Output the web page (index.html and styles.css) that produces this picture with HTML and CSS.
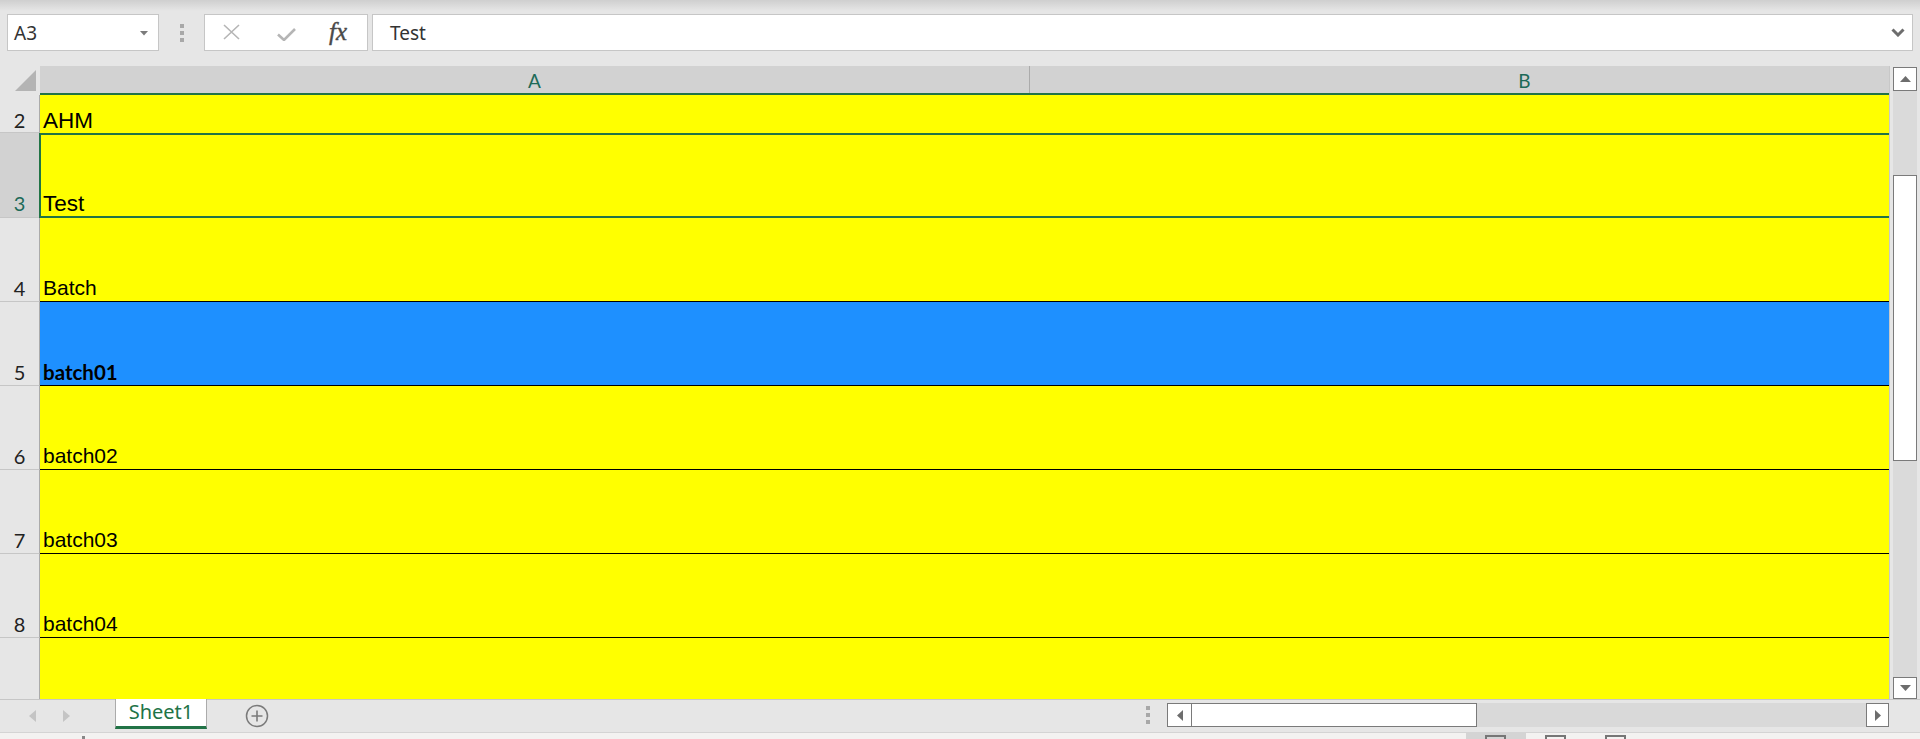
FILE: index.html
```html
<!DOCTYPE html>
<html lang="en">
<head>
    <meta charset="UTF-8">
    <title>Book1 - Sheet1</title>
    <link rel="stylesheet" href="styles.css">
</head>
<body>
    <div class="formula-bar">
        <div class="name-box">
            <span>A3</span>
            <svg class="nb-arrow" width="8" height="5" viewBox="0 0 8 5"><polygon points="0,0 8,0 4,4.5" fill="#7b7b7b"/></svg>
        </div>
        <div class="grip"><i></i><i></i><i></i></div>
        <div class="fx-buttons">
            <svg class="fx-cancel" width="17" height="16" viewBox="0 0 17 16"><path d="M1 1 L16 15 M16 1 L1 15" stroke="#b5b5b5" stroke-width="1.6" fill="none"/></svg>
            <svg class="fx-enter" width="19" height="13" viewBox="0 0 19 13"><path d="M1 6.5 L7 12 L18 1" stroke="#b5b5b5" stroke-width="2.6" fill="none"/></svg>
            <span class="fx-label"><i>f</i><i>x</i></span>
        </div>
        <div class="formula-input">
            <span>Test</span>
            <svg class="fx-expand" width="14" height="9" viewBox="0 0 14 9"><path d="M1.5 1.5 L7 7 L12.5 1.5" stroke="#6d6d6d" stroke-width="3" fill="none"/></svg>
        </div>
    </div>

    <div class="workbook">
        <div class="sheet">
            <div class="col-head-row">
                <div class="corner">
                    <svg width="22" height="22" viewBox="0 0 22 22"><polygon points="21,0 21,21 0,21" fill="#b4b4b4"/></svg>
                </div>
                <div class="col-heads">
                    <div class="col-head">A</div>
                    <div class="col-head">B</div>
                </div>
            </div>

            <div class="row row-short">
                <div class="row-head">2</div>
                <div class="cell cell-lg">AHM</div>
            </div>
            <div class="row row-selected">
                <div class="row-head">3</div>
                <div class="cell cell-lg">Test</div>
            </div>
            <div class="row">
                <div class="row-head">4</div>
                <div class="cell">Batch</div>
            </div>
            <div class="row">
                <div class="row-head">5</div>
                <div class="cell cell-blue">batch01</div>
            </div>
            <div class="row">
                <div class="row-head">6</div>
                <div class="cell">batch02</div>
            </div>
            <div class="row">
                <div class="row-head">7</div>
                <div class="cell">batch03</div>
            </div>
            <div class="row">
                <div class="row-head">8</div>
                <div class="cell">batch04</div>
            </div>
            <div class="row">
                <div class="row-head"></div>
                <div class="cell"></div>
            </div>
        </div>

        <div class="vscroll">
            <div class="vbtn">
                <svg width="11" height="6" viewBox="0 0 11 6"><polygon points="0,6 11,6 5.5,0" fill="#6d6d6d"/></svg>
            </div>
            <div class="vtrack"><div class="vthumb"></div></div>
            <div class="vbtn vbtn-down">
                <svg width="11" height="6" viewBox="0 0 11 6"><polygon points="0,0 11,0 5.5,6" fill="#6d6d6d"/></svg>
            </div>
        </div>
    </div>

    <div class="tab-bar">
        <div class="tab-nav">
            <span><svg width="7" height="12" viewBox="0 0 7 12"><polygon points="7,0 7,12 0,6" fill="#c4c4c4"/></svg></span>
            <span><svg width="7" height="12" viewBox="0 0 7 12"><polygon points="0,0 0,12 7,6" fill="#c4c4c4"/></svg></span>
        </div>
        <div class="sheet-tab">Sheet1</div>
        <div class="add-sheet">
            <svg width="24" height="24" viewBox="0 0 24 24">
                <circle cx="12" cy="12" r="10.5" stroke="#7a7a7a" stroke-width="1.5" fill="none"/>
                <path d="M12 6.5 V17.5 M6.5 12 H17.5" stroke="#7a7a7a" stroke-width="1.6"/>
            </svg>
        </div>
        <div class="hscroll">
            <div class="grip grip-small"><i></i><i></i><i></i></div>
            <div class="hbtn">
                <svg width="6" height="11" viewBox="0 0 6 11"><polygon points="6,0 6,11 0,5.5" fill="#6d6d6d"/></svg>
            </div>
            <div class="hthumb"></div>
            <div class="htrack"></div>
            <div class="hbtn hbtn-right">
                <svg width="6" height="11" viewBox="0 0 6 11"><polygon points="0,0 0,11 6,5.5" fill="#6d6d6d"/></svg>
            </div>
        </div>
    </div>

    <div class="status-bar">
        <i class="status-mark"></i>
        <div class="view-btns">
            <div class="view-btn active"><i></i></div>
            <div class="view-btn"><i></i></div>
            <div class="view-btn"><i></i></div>
        </div>
    </div>
</body>
</html>
```

FILE: styles.css
```css
* {
    margin: 0;
    padding: 0;
    box-sizing: border-box;
}

body {
    width: 1920px;
    height: 739px;
    overflow: hidden;
    background: #e6e6e6;
    font-family: "Noto Sans", "Open Sans", sans-serif;
    color: #333;
}

/* formula bar */

.formula-bar {
    height: 66px;
    padding-top: 14px;
    display: flex;
    align-items: flex-start;
    background: linear-gradient(#cfcfcf, #e6e6e6 11px);
}

.name-box {
    margin-left: 7px;
    width: 152px;
    height: 37px;
    background: #fff;
    border: 1px solid #c6c6c6;
    display: flex;
    align-items: center;
    justify-content: space-between;
    padding: 0 10px 0 6px;
    font-size: 19px;
    color: #333;
}

.nb-arrow {
    margin-top: 1px;
}

.grip {
    width: 45px;
    height: 37px;
    display: flex;
    flex-direction: column;
    align-items: center;
    justify-content: center;
    gap: 3px;
}

.grip i {
    display: block;
    width: 4px;
    height: 4px;
    background: #a8a8a8;
}

.fx-buttons {
    width: 164px;
    height: 37px;
    background: #fff;
    border: 1px solid #c6c6c6;
    display: flex;
    align-items: center;
    padding-left: 18px;
}

.fx-cancel {
    margin-top: -2px;
}

.fx-enter {
    margin-left: 37px;
    margin-top: 4px;
}

.fx-label {
    margin-left: 33px;
    font-family: "Liberation Serif", serif;
    font-size: 25px;
    color: #4a4a4a;
    line-height: 1;
    margin-top: -2px;
    -webkit-text-stroke: 0.4px #4a4a4a;
}

.formula-input {
    flex: 1;
    margin: 0 7px 0 4px;
    height: 37px;
    background: #fff;
    border: 1px solid #c6c6c6;
    display: flex;
    align-items: center;
    justify-content: space-between;
    padding: 0 7px 0 17px;
    font-size: 19px;
    color: #333;
}

/* sheet grid */

.workbook {
    height: 633px;
    display: flex;
}

.sheet {
    flex: 1;
    display: flex;
    flex-direction: column;
    overflow: hidden;
}

.col-head-row {
    height: 29px;
    display: flex;
    flex-shrink: 0;
}

.corner {
    width: 40px;
    background: #e6e6e6;
    padding: 4px 0 0 15px;
}

.col-heads {
    flex: 1;
    display: flex;
    overflow: hidden;
    background: #d2d2d2;
    border-bottom: 2px solid #217346;
}

.col-head {
    flex: 0 0 990px;
    border-right: 1px solid #ababab;
    text-align: center;
    font-family: Lato, "Liberation Sans", sans-serif;
    font-size: 19px;
    line-height: 29px;
    color: #1d6a58;
}

.row {
    display: flex;
    height: 84px;
    flex-shrink: 0;
}

.row-short {
    height: 38px;
}

.row-selected {
    height: 85px;
}

.row-head {
    width: 40px;
    background: #e6e6e6;
    border-right: 1px solid #ababab;
    border-bottom: 1px solid #c6c6c6;
    display: flex;
    align-items: flex-end;
    justify-content: center;
    padding-bottom: 1px;
    font-family: Lato, "Liberation Sans", sans-serif;
    font-size: 20px;
    line-height: 24px;
    color: #222;
}

.cell {
    flex: 1;
    background: #ffff00;
    border-bottom: 1px solid #000;
    display: flex;
    align-items: flex-end;
    padding: 0 0 1px 3px;
    font-family: "Liberation Sans", Arial, sans-serif;
    font-size: 21px;
    line-height: 24px;
    color: #000;
}

.cell-lg {
    font-size: 22.5px;
}

.row-short .cell {
    border-bottom: none;
    padding-bottom: 0;
}

.row-short .row-head {
    padding-bottom: 0;
}

.row-selected .row-head {
    background: #d2d2d2;
    color: #1d6a58;
    padding-bottom: 2px;
}

.row-selected .cell {
    border-bottom: none;
    padding-bottom: 2px;
    margin-left: -1px;
    padding-left: 4px;
    box-shadow: inset 2px 0 0 #217346, inset 0 2px 0 #217346, inset 0 -2px 0 #217346;
}

.cell-blue {
    background: #1e90ff;
    font-family: Lato, "Liberation Sans", sans-serif;
    font-weight: 700;
    font-size: 20.5px;
}

/* vertical scrollbar */

.vscroll {
    width: 31px;
    display: flex;
    flex-direction: column;
    padding: 1px 3px 0 3px;
    border-left: 1px solid #c8c8c8;
}

.vbtn {
    height: 24px;
    background: #fff;
    border: 1px solid #7a7a7a;
    display: flex;
    align-items: center;
    justify-content: center;
    flex-shrink: 0;
}

.vbtn-down {
    height: 22px;
}

.vtrack {
    flex: 1;
    background: #dadada;
    padding-top: 84px;
}

.vthumb {
    height: 286px;
    background: #fff;
    border: 1px solid #7a7a7a;
}

/* sheet tabs */

.tab-bar {
    height: 33px;
    border-top: 1px solid #c6c6c6;
    display: flex;
    align-items: flex-start;
}

.tab-nav {
    display: flex;
    padding-left: 15px;
}

.tab-nav span {
    width: 34px;
    height: 32px;
    display: flex;
    align-items: center;
    justify-content: center;
}

.sheet-tab {
    margin: -1px 0 0 32px;
    width: 92px;
    height: 30px;
    background: #fff;
    border: 1px solid #ababab;
    border-top: none;
    border-bottom: 3px solid #217346;
    text-align: center;
    font-size: 20px;
    line-height: 24px;
    padding-top: 1px;
    color: #217346;
}

.add-sheet {
    margin: 4px 0 0 38px;
    width: 24px;
    height: 24px;
}

.hscroll {
    margin-left: auto;
    margin-right: 31px;
    width: 751px;
    display: flex;
    align-items: flex-start;
    padding-top: 3px;
}

.grip-small {
    width: 20px;
    height: 24px;
    gap: 3px;
}

.grip-small i {
    width: 4px;
    height: 4px;
}

.hbtn {
    margin-left: 9px;
    width: 25px;
    height: 24px;
    background: #fff;
    border: 1px solid #7a7a7a;
    display: flex;
    align-items: center;
    justify-content: center;
}

.hbtn-right {
    margin-left: 0;
    width: 23px;
}

.hthumb {
    width: 285px;
    height: 24px;
    background: #fff;
    border: 1px solid #7a7a7a;
    border-left: none;
}

.htrack {
    flex: 1;
    height: 24px;
    background: #d9d9d9;
}

/* status bar */

.status-bar {
    height: 7px;
    background: #f3f2f1;
    border-top: 1px solid #d4d4d4;
    display: flex;
    align-items: flex-start;
    overflow: hidden;
}

.status-mark {
    margin: 3px 0 0 82px;
    width: 3px;
    height: 3px;
    background: #888;
}

.view-btns {
    margin-left: 1381px;
    display: flex;
}

.view-btn {
    width: 60px;
    height: 6px;
    padding: 2px 0 0 19px;
}

.view-btn.active {
    background: #d4d4d4;
}

.view-btn i {
    display: block;
    width: 21px;
    height: 8px;
    border: 2px solid #767676;
}
```
